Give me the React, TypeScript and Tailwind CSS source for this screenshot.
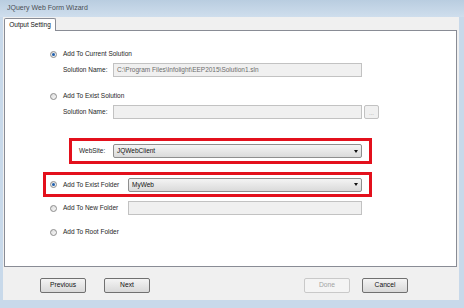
import React from 'react'

function Radio({ checked }: { checked?: boolean }) {
  return (
    <span className="flex h-[7px] w-[7px] flex-shrink-0 items-center justify-center rounded-full border border-[#8c8c8c] bg-gradient-to-br from-[#dcdcdc] to-[#f8f8f8]">
      {checked && <span className="h-[3px] w-[3px] rounded-full bg-[#1f5fae]" />}
    </span>
  )
}

function TextBox({ value, className }: { value?: string; className: string }) {
  return (
    <div
      className={`flex h-[14px] items-center border border-[#c2c2c2] bg-[#f0f0f0] pl-[3px] text-[6.5px] text-[#6d6d6d] ${className}`}
    >
      {value}
    </div>
  )
}

function Combo({ value, className }: { value: string; className: string }) {
  return (
    <div
      className={`flex h-[14px] items-center justify-between rounded-[2px] border border-[#8e8e8e] bg-gradient-to-b from-[#f4f4f4] to-[#dadada] pl-[3px] pr-[3px] text-[6.5px] text-[#111] ${className}`}
    >
      <span>{value}</span>
      <span className="h-0 w-0 border-x-[2.5px] border-t-[3px] border-x-transparent border-t-[#111]" />
    </div>
  )
}

function Button({ label, disabled }: { label: string; disabled?: boolean }) {
  return (
    <div
      className={`flex h-[15px] w-[46px] items-center justify-center rounded-[2px] border text-[6.7px] ${
        disabled
          ? 'border-[#c9c9c9] bg-[#f4f4f4] text-[#a3a3a3]'
          : 'border-[#707070] bg-gradient-to-b from-[#f4f4f4] to-[#d9d9d9] text-[#111]'
      }`}
    >
      {label}
    </div>
  )
}

export default function App() {
  return (
    <div className="flex h-[308px] w-[464px] flex-col bg-[#c8d9ea] [font-family:'Liberation_Sans',Arial,sans-serif]">
      <div className="flex h-[17px] items-center bg-gradient-to-b from-[#b9cde0] to-[#cfdeed] pl-[7px] text-[7px] text-[#4a4f55]">
        JQuery Web Form Wizard
      </div>

      <div className="ml-[3px] mr-[5px] flex h-[283px] flex-col bg-[#f0f0f0] pl-[1px] pr-[2px]">
        {/* tab strip */}
        <div className="mt-[1px] flex h-[13px] items-end">
          <div className="flex h-[13px] w-[52px] items-center justify-center rounded-t-[2px] border-x border-t border-[#898c95] bg-white text-[6.5px] text-[#111]">
            Output Setting
          </div>
          <div className="h-full flex-1 border-b border-[#898c95]" />
        </div>

        {/* tab panel */}
        <div className="flex h-[236px] flex-col border-x border-b border-[#898c95] bg-white pl-[45px] text-[6.5px] text-[#1e1e1e]">
          <div className="mt-[17px] flex h-[12px] items-center gap-[6px]">
            <Radio checked />
            <span>Add To Current Solution</span>
          </div>
          <div className="mt-[3px] flex h-[14px] items-center pl-[13px]">
            <span className="w-[50px]">Solution Name:</span>
            <TextBox className="w-[249px]" value="C:\Program Files\Infolight\EEP2015\Solution1.sln" />
          </div>

          <div className="mt-[13px] flex h-[12px] items-center gap-[6px]">
            <Radio />
            <span>Add To Exist Solution</span>
          </div>
          <div className="mt-[3px] flex h-[14px] items-center pl-[13px]">
            <span className="w-[50px]">Solution Name:</span>
            <TextBox className="w-[249px]" />
            <div className="ml-[2px] flex h-[14px] w-[15px] items-end justify-center rounded-[2px] border border-[#c2c2c2] bg-[#f0f0f0] pb-[2px] text-[6px] leading-none text-[#9a9a9a]">
              ...
            </div>
          </div>

          <div className="ml-[19px] mt-[19px] flex h-[26px] w-[303px] items-center border-[3px] border-[#e3101c] pl-[7px]">
            <span className="w-[34px]">WebSite:</span>
            <Combo className="w-[249px]" value="JQWebClient" />
          </div>

          <div className="-ml-[7px] mt-[8px] flex h-[25px] w-[329px] items-center border-[3px] border-[#e3101c] pl-[4px]">
            <Radio checked />
            <span className="ml-[6px] w-[65px]">Add To Exist Folder</span>
            <Combo className="w-[234px]" value="MyWeb" />
          </div>

          <div className="mt-[4px] flex h-[14px] items-center">
            <Radio />
            <span className="ml-[6px] w-[65px]">Add To New Folder</span>
            <TextBox className="w-[234px]" />
          </div>

          <div className="mt-[11px] flex h-[12px] items-center gap-[6px]">
            <Radio />
            <span>Add To Root Folder</span>
          </div>
        </div>

        {/* buttons */}
        <div className="mt-[11px] flex items-center pl-[36px]">
          <Button label="Previous" />
          <div className="ml-[18px]">
            <Button label="Next" />
          </div>
          <div className="ml-[154px]">
            <Button label="Done" disabled />
          </div>
          <div className="ml-[12px]">
            <Button label="Cancel" />
          </div>
        </div>
      </div>
    </div>
  )
}
